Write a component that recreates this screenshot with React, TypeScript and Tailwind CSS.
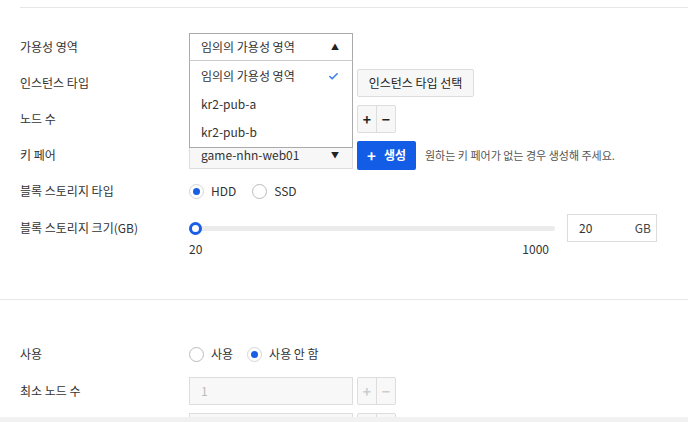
import { Check } from 'lucide-react';

const font = { fontFamily: '"Noto Sans CJK KR", "Noto Sans", sans-serif' };

function Label({ children }: { children?: React.ReactNode }) {
  return <div className="w-[189px] shrink-0 pl-[20px] text-[12px] text-[#333]">{children}</div>;
}

function Radio({ checked, label }: { checked?: boolean; label: string }) {
  return (
    <label className="flex items-center gap-[7px]">
      <span
        className={
          checked
            ? 'flex h-[15px] w-[15px] items-center justify-center rounded-full border border-[#d5d5d5] bg-white'
            : 'h-[15px] w-[15px] rounded-full border border-[#bbb] bg-white'
        }
      >
        {checked && <span className="h-[7px] w-[7px] rounded-full bg-[#1a5ee6]" />}
      </span>
      <span className="text-[12px] text-[#333]">{label}</span>
    </label>
  );
}

function Stepper({ disabled }: { disabled?: boolean }) {
  const tone = disabled ? 'text-[#ccc] bg-[#f8f8f8]' : 'text-[#222] bg-[#f7f7f7]';
  return (
    <div className={`ml-[4px] flex h-[28px] w-[39px] rounded-[2px] border border-[#ddd] ${tone}`}>
      <span className="flex flex-1 items-center justify-center border-r border-[#ddd] text-[14px] font-bold">+</span>
      <span className="flex flex-1 items-center justify-center text-[14px] font-bold">−</span>
    </div>
  );
}

export default function App() {
  return (
    <div style={font} className="relative h-[422px] w-[688px] overflow-hidden bg-white text-[#333]">
      <div className="pt-[7px]">
        <div className="ml-[20px] border-t border-[#e6e6e6]" />
      </div>

      <div className="flex flex-col gap-[8px] pt-[25px]">
        {/* 가용성 영역 */}
        <div className="flex h-[28px] items-center">
          <Label>가용성 영역</Label>
          <div className="relative">
            <div className="flex h-[28px] w-[164px] items-center justify-between border border-[#aaa] bg-white pl-[11px] pr-[13px] text-[12px]">
              <span>임의의 가용성 영역</span>
              <span className="text-[8px] text-[#222]">▲</span>
            </div>
            <ul className="absolute left-0 top-[27px] z-10 w-[164px] border border-[#aaa] border-t-[#ccc] bg-white py-[1px] text-[12px]">
              <li className="flex h-[28px] items-center justify-between pl-[11px] pr-[13px]">
                <span>임의의 가용성 영역</span>
                <Check size={11} strokeWidth={3.5} className="text-[#3d7fe8]" />
              </li>
              <li className="flex h-[28px] items-center pl-[11px]">kr2-pub-a</li>
              <li className="flex h-[28px] items-center pl-[11px]">kr2-pub-b</li>
            </ul>
          </div>
        </div>

        {/* 인스턴스 타입 */}
        <div className="flex h-[28px] items-center">
          <Label>인스턴스 타입</Label>
          <div className="h-[28px] w-[164px] border border-[#ddd] bg-[#f7f7f7]" />
          <button className="ml-[4px] h-[28px] w-[117px] rounded-[2px] border border-[#ddd] bg-[#f7f7f7] text-[12px] text-[#222]">
            인스턴스 타입 선택
          </button>
        </div>

        {/* 노드 수 */}
        <div className="flex h-[28px] items-center">
          <Label>노드 수</Label>
          <div className="h-[28px] w-[164px] border border-[#ddd] bg-white" />
          <Stepper />
        </div>

        {/* 키 페어 */}
        <div className="flex h-[28px] items-center">
          <Label>키 페어</Label>
          <div className="flex h-[28px] w-[164px] items-center justify-between border border-[#ddd] bg-[#f7f7f7] pl-[11px] pr-[13px] text-[12px]">
            <span>game-nhn-web01</span>
            <span className="text-[8px] text-[#222]">▼</span>
          </div>
          <button className="ml-[4px] flex h-[29px] w-[59px] items-center justify-center gap-[8px] rounded-[2px] bg-[#125ce6] text-[12px] font-bold text-white">
            <span className="text-[15px] leading-none">+</span>
            <span>생성</span>
          </button>
          <span className="ml-[9px] text-[11px] text-[#555]">원하는 키 페어가 없는 경우 생성해 주세요.</span>
        </div>

        {/* 블록 스토리지 타입 */}
        <div className="flex h-[28px] items-center">
          <Label>블록 스토리지 타입</Label>
          <div className="flex items-center gap-[16px]">
            <Radio checked label="HDD" />
            <Radio label="SSD" />
          </div>
        </div>

        {/* 블록 스토리지 크기 */}
        <div className="mt-[1px] flex items-start">
          <div className="flex h-[28px] items-center">
            <Label>블록 스토리지 크기(GB)</Label>
          </div>
          <div className="flex w-[366px] flex-col">
            <div className="relative flex h-[28px] items-center">
              <div className="h-[5px] w-full rounded-full bg-[#ebebeb]" />
              <span className="absolute left-[0px] top-[8px] h-[13px] w-[13px] rounded-full border-[3px] border-[#1a5ee6] bg-white" />
            </div>
            <div className="-mt-[2px] flex justify-between text-[12px] text-[#333]">
              <span>20</span>
              <span className="mr-[6px]">1000</span>
            </div>
          </div>
          <div className="ml-[12px] flex h-[28px] w-[90px] items-center justify-between border border-[#ddd] bg-white pl-[11px] pr-[5px] text-[12px]">
            <span>20</span>
            <span className="text-[#444]">GB</span>
          </div>
        </div>
      </div>

      <div className="mt-[41px] border-t border-[#e8e8e8]" />

      <div className="flex flex-col gap-[8px] pt-[40px]">
        <div className="flex h-[28px] items-center">
          <Label>사용</Label>
          <div className="flex items-center gap-[14px]">
            <Radio label="사용" />
            <Radio checked label="사용 안 함" />
          </div>
        </div>
        <div className="mt-[1px] flex h-[28px] items-center">
          <Label>최소 노드 수</Label>
          <div className="flex h-[28px] w-[164px] items-center border border-[#ddd] bg-[#f8f8f8] pl-[11px] text-[12px] text-[#bbb]">1</div>
          <Stepper disabled />
        </div>
        <div className="flex h-[28px] items-center">
          <Label />
          <div className="h-[28px] w-[164px] border border-[#ddd] bg-[#f8f8f8]" />
          <div className="ml-[4px] flex h-[28px] w-[39px] rounded-[2px] border border-[#ddd] bg-[#f8f8f8]">
            <span className="flex-1 border-r border-[#ddd]" />
            <span className="flex-1" />
          </div>
        </div>
      </div>

      <div className="absolute bottom-0 left-0 h-[5px] w-full bg-[#f1f1f1]" />
    </div>
  );
}
